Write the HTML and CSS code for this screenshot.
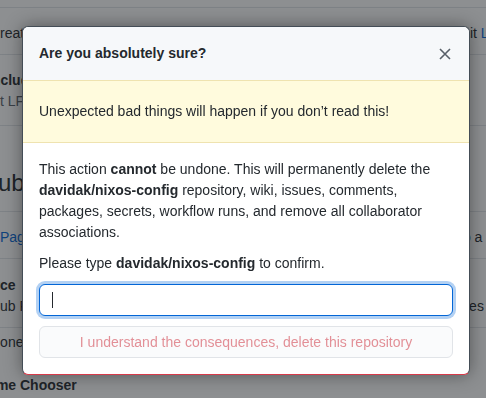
FILE: index.html
```html
<!DOCTYPE html>
<html lang="en">
<head>
    <meta charset="UTF-8">
    <meta name="viewport" content="width=device-width, initial-scale=1.0">
    <title>Delete repository</title>
    <link rel="stylesheet" href="styles.css">
</head>
<body>

    <div class="page">
        <div class="sect sect-top"></div>
        <div class="sect sect-a">
            <div class="ln"><span class="l pad-a">Create</span><span class="r">Git <a href="#">LFS</a></span></div>
        </div>
        <div class="sect sect-b">
            <div class="ln"><strong class="l pad-b">Include Git LFS objects in archives</strong></div>
            <div class="ln"><span class="l muted pad-c">Git LFS</span></div>
        </div>
        <div class="sect sect-c">
            <h2 class="l pad-d">GitHub Pages</h2>
        </div>
        <div class="sect sect-d">
            <div class="ln"><a class="l pad-e" href="#">Pages</a><span class="r">to a</span></div>
        </div>
        <div class="sect sect-e">
            <div class="ln"><strong class="l pad-f">Source</strong></div>
            <div class="ln"><span class="l pad-g">GitHub Pages</span><span class="r">files from</span></div>
        </div>
        <div class="sect-f">
            <div class="ln"><span class="l pad-h">None &#9662;</span></div>
            <div class="ln theme"><strong class="l pad-i">Theme Chooser</strong></div>
        </div>
    </div>

    <div class="overlay"></div>

    <div class="dialog">
        <div class="dialog-header">
            <h3>Are you absolutely sure?</h3>
            <button class="close" aria-label="Close">
                <svg width="12" height="12" viewBox="0 0 12 12"><path d="M1 1L11 11M11 1L1 11" stroke="currentColor" stroke-width="1.6" fill="none"/></svg>
            </button>
        </div>
        <div class="flash">Unexpected bad things will happen if you don’t read this!</div>
        <div class="dialog-body">
            <p>This action <strong>cannot</strong> be undone. This will permanently delete the <strong>davidak/nixos-config</strong> repository, wiki, issues, comments, packages, secrets, workflow runs, and remove all collaborator associations.</p>
            <p>Please type <strong>davidak/nixos-config</strong> to confirm.</p>
            <span class="input-wrap"><input type="text" class="form-control" aria-label="Repository name"></span>
            <button class="btn-danger" disabled>I understand the consequences, delete this repository</button>
        </div>
    </div>

</body>
</html>
```

FILE: styles.css
```css
body {
    font-family: "Liberation Sans", Arial, sans-serif;
    font-size: 14px;
    line-height: 21px;
    color: #24292e;
    background: #fff;
    margin: 0;
    overflow: hidden;
}
a {
    color: #0366d6;
    text-decoration: none;
}

/* page behind the dialog */
.page {
    margin-left: -60px;
    width: 600px;
    white-space: nowrap;
}
.sect {
    border-bottom: 1px solid #e1e4e8;
}
.sect-top {
    height: 7px;
}
.sect-a {
    padding: 15px 0 10px;
}
.sect-b {
    padding: 15px 0 13px;
}
.sect-c {
    padding: 39px 0 10px;
}
.sect-d {
    padding: 15px 0 10px;
}
.sect-e {
    padding: 16px 0 10px;
}
.sect-f {
    padding: 4px 0 0;
}
.ln {
    display: grid;
    grid-template-columns: 519px auto;
}
.theme {
    margin-top: 22px;
}
.l {
    display: block;
    overflow: hidden;
}
.muted {
    color: #586069;
}
h2 {
    font-size: 24px;
    font-weight: 400;
    line-height: 36px;
    margin: 0;
}
.pad-a { padding-left: 50px; }
.pad-b { padding-left: 48px; }
.pad-c { padding-left: 46px; }
.pad-d { padding-left: 10px; }
.pad-e { padding-left: 60px; }
.pad-f { padding-left: 28px; }
.pad-g { padding-left: 32px; }
.pad-h { padding-left: 50px; }
.pad-i { padding-left: 31px; }

.overlay {
    position: fixed;
    top: 0;
    left: 0;
    right: 0;
    bottom: 0;
    background: rgba(27, 31, 35, 0.5);
}

/* dialog */
.dialog {
    position: fixed;
    top: 26px;
    left: 22px;
    width: 448px;
    box-sizing: border-box;
    background: #fff;
    border: 1px solid #444d56;
    border-bottom-color: #d73a49;
    border-radius: 6px;
    box-shadow: 0 0 18px rgba(0, 0, 0, 0.4);
}
.dialog-header {
    display: flex;
    justify-content: space-between;
    align-items: center;
    padding: 16px;
    background: #f6f8fa;
    border-radius: 6px 6px 0 0;
}
.dialog-header h3 {
    margin: 0;
    font-size: 14px;
    line-height: 21px;
    font-weight: bold;
}
.close {
    display: flex;
    background: none;
    border: 0;
    padding: 0;
    margin-right: 2px;
    color: #586069;
    cursor: pointer;
}
.flash {
    background: #fffbdd;
    border-top: 1px solid rgba(176, 136, 0, 0.2);
    border-bottom: 1px solid rgba(176, 136, 0, 0.2);
    padding: 20px 16px;
}
.dialog-body {
    padding: 16px;
}
.dialog-body p {
    margin: 0 0 10px;
}
.input-wrap {
    position: relative;
    display: block;
}
.input-wrap::after {
    content: "";
    position: absolute;
    left: 13px;
    top: 8px;
    width: 1px;
    height: 16px;
    background: #24292e;
}
.form-control {
    display: block;
    width: 100%;
    height: 32px;
    box-sizing: border-box;
    padding: 5px 12px;
    font: inherit;
    border: 1px solid #0366d6;
    border-radius: 6px;
    box-shadow: 0 0 0 3px rgba(3, 102, 214, 0.3);
    outline: none;
}
.btn-danger {
    display: block;
    width: 100%;
    margin-top: 10px;
    padding: 5px 16px;
    font: inherit;
    line-height: 20px;
    color: rgba(203, 36, 49, 0.5);
    background: #fafbfc;
    border: 1px solid #e1e4e8;
    border-radius: 6px;
}
```
